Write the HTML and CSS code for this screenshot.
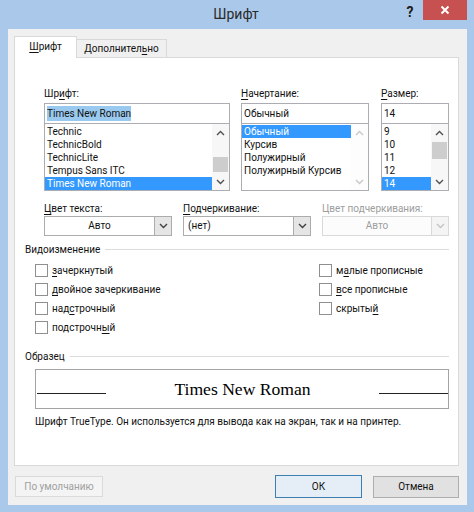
FILE: index.html
```html
<!DOCTYPE html>
<html lang="ru">
<head>
<meta charset="utf-8">
<title>Шрифт</title>
<link rel="stylesheet" href="styles.css">
</head>
<body>
<div class="win">
  <div class="titlebar">
    <div class="title">Шрифт</div>
    <div class="help">?</div>
    <div class="close"><svg width="10" height="10" viewBox="0 0 10 10"><path d="M1.5 1.5 L8.5 8.5 M8.5 1.5 L1.5 8.5" stroke="#fff" stroke-width="2" fill="none"/></svg></div>
  </div>
  <div class="dlg">
    <div class="tabs">
      <div class="tab active"><u>Ш</u>рифт</div>
      <div class="tab other">Дополнител<u>ь</u>но</div>
    </div>
    <div class="panel">
      <div class="row1">
        <div class="col c-font">
          <div class="lbl">Шр<u>и</u>фт:</div>
          <div class="edit"><span class="sel">Times New Roman</span></div>
          <div class="list">
            <div class="items">
              <div class="item">Technic</div>
              <div class="item">TechnicBold</div>
              <div class="item">TechnicLite</div>
              <div class="item">Tempus Sans ITC</div>
              <div class="item on">Times New Roman</div>
            </div>
            <div class="sb">
              <div class="arr"><svg width="9" height="6" viewBox="0 0 9 6"><path d="M1 5 L4.5 1.5 L8 5" stroke="#505050" stroke-width="1.4" fill="none"/></svg></div>
              <div class="track"><div class="thumb t-font"></div></div>
              <div class="arr"><svg width="9" height="6" viewBox="0 0 9 6"><path d="M1 1 L4.5 4.5 L8 1" stroke="#505050" stroke-width="1.4" fill="none"/></svg></div>
            </div>
          </div>
        </div>
        <div class="col c-style">
          <div class="lbl"><u>Н</u>ачертание:</div>
          <div class="edit">Обычный</div>
          <div class="list">
            <div class="items">
              <div class="item on">Обычный</div>
              <div class="item">Курсив</div>
              <div class="item">Полужирный</div>
              <div class="item">Полужирный Курсив</div>
            </div>
            <div class="sb dis">
              <div class="arr"><svg width="9" height="6" viewBox="0 0 9 6"><path d="M1 5 L4.5 1.5 L8 5" stroke="#c8c8c8" stroke-width="1.4" fill="none"/></svg></div>
              <div class="track"></div>
              <div class="arr"><svg width="9" height="6" viewBox="0 0 9 6"><path d="M1 1 L4.5 4.5 L8 1" stroke="#c8c8c8" stroke-width="1.4" fill="none"/></svg></div>
            </div>
          </div>
        </div>
        <div class="col c-size">
          <div class="lbl"><u>Р</u>азмер:</div>
          <div class="edit">14</div>
          <div class="list">
            <div class="items">
              <div class="item">9</div>
              <div class="item">10</div>
              <div class="item">11</div>
              <div class="item">12</div>
              <div class="item on">14</div>
            </div>
            <div class="sb">
              <div class="arr"><svg width="9" height="6" viewBox="0 0 9 6"><path d="M1 5 L4.5 1.5 L8 5" stroke="#505050" stroke-width="1.4" fill="none"/></svg></div>
              <div class="track"><div class="thumb t-size"></div></div>
              <div class="arr"><svg width="9" height="6" viewBox="0 0 9 6"><path d="M1 1 L4.5 4.5 L8 1" stroke="#505050" stroke-width="1.4" fill="none"/></svg></div>
            </div>
          </div>
        </div>
      </div>

      <div class="row2">
        <div class="col c-a">
          <div class="lbl"><u>Ц</u>вет текста:</div>
          <div class="combo">
            <div class="val center">Авто</div>
            <div class="drop"><svg width="9" height="6" viewBox="0 0 9 6"><path d="M1 1 L4.5 4.5 L8 1" stroke="#404040" stroke-width="1.4" fill="none"/></svg></div>
          </div>
        </div>
        <div class="col c-b">
          <div class="lbl"><u>П</u>одчеркивание:</div>
          <div class="combo">
            <div class="val">(нет)</div>
            <div class="drop"><svg width="9" height="6" viewBox="0 0 9 6"><path d="M1 1 L4.5 4.5 L8 1" stroke="#404040" stroke-width="1.4" fill="none"/></svg></div>
          </div>
        </div>
        <div class="col c-c">
          <div class="lbl gray">Цвет подчеркивания:</div>
          <div class="combo dis">
            <div class="val center">Авто</div>
            <div class="drop"><svg width="9" height="6" viewBox="0 0 9 6"><path d="M1 1 L4.5 4.5 L8 1" stroke="#c4c4c4" stroke-width="1.4" fill="none"/></svg></div>
          </div>
        </div>
      </div>

      <div class="hdr h-mod">Видоизменение</div>
      <div class="checks">
        <div class="ccol left">
          <div class="chk"><span class="box"></span><span><u>з</u>ачеркнутый</span></div>
          <div class="chk"><span class="box"></span><span><u>д</u>войное зачеркивание</span></div>
          <div class="chk"><span class="box"></span><span>над<u>с</u>трочный</span></div>
          <div class="chk"><span class="box"></span><span>подстрочн<u>ы</u>й</span></div>
        </div>
        <div class="ccol right">
          <div class="chk"><span class="box"></span><span>м<u>а</u>лые прописные</span></div>
          <div class="chk"><span class="box"></span><span><u>в</u>се прописные</span></div>
          <div class="chk"><span class="box"></span><span>скрыты<u>й</u></span></div>
        </div>
      </div>

      <div class="hdr h-sample">Образец</div>
      <div class="sample">
        <span class="ln"></span>
        <span class="stext">Times New Roman</span>
        <span class="ln"></span>
      </div>
      <div class="desc">Шрифт TrueType. Он используется для вывода как на экран, так и на принтер.</div>
    </div>
    <div class="btnrow">
      <div class="btn def-dis">По умолчанию</div>
      <div class="spacer"></div>
      <div class="btn ok">ОК</div>
      <div class="btn cancel">Отмена</div>
    </div>
  </div>
</div>
</body>
</html>
```

FILE: styles.css
```css
html, body { margin: 0; padding: 0; }
body {
  width: 474px; height: 512px; overflow: hidden;
  background: #aac9ea;
  font-family: Roboto, "Noto Sans", sans-serif;
  font-size: 10px; color: #111;
}
u { text-decoration: underline; text-underline-offset: 1.5px; }
.win { height: 512px; display: flex; flex-direction: column; }

.titlebar { height: 29px; flex: none; display: flex; align-items: flex-start; }
.title { flex: 1; padding-left: 70px; text-align: center; font-size: 14px; line-height: 29px; color: #2b2b2b; }
.help { width: 16px; margin-right: 5px; font-weight: bold; font-size: 14px; line-height: 24px; text-align: center; color: #1c1c1c; }
.close { width: 44px; height: 20px; margin-right: 7px; background: #c75050; display: flex; align-items: center; justify-content: center; }

.dlg {
  margin: 0 7px 0 8px; height: 476px; box-sizing: border-box;
  background: #f0f0f0; padding: 7px 8px 0 6px;
  display: flex; flex-direction: column;
}
.tabs { display: flex; align-items: flex-end; height: 21px; flex: none; }
.tab { box-sizing: border-box; border: 1px solid #d9d9d9; border-bottom: none; text-align: center; }
.tab.active { width: 63px; height: 22px; margin-bottom: -1px; background: #fff; position: relative; line-height: 20px; }
.tab.other { width: 90px; height: 18px; border-left: none; background: #f0f0f0; line-height: 17px; }

.panel {
  height: 409px; flex: none; box-sizing: border-box;
  border: 1px solid #d9d9d9; background: #fff;
  display: flex; flex-direction: column;
}

.lbl { height: 15px; line-height: 15px; white-space: nowrap; }
.lbl.gray { color: #9d9d9d; }

.row1 { display: flex; margin: 28px 0 0 29px; }
.col { display: flex; flex-direction: column; }
.c-font { width: 186px; }
.c-style { width: 128px; margin-left: 11px; }
.c-size { width: 68px; margin-left: 12px; }
.row1 .lbl { margin-bottom: 2px; }

.edit {
  height: 21px; box-sizing: border-box; border: 1px solid #abadb3;
  padding: 0 0 0 2px; line-height: 19px; white-space: nowrap;
}
.edit .sel { background: #99c9ef; padding: 2px 0; }

.list {
  height: 68px; margin-top: -1px; box-sizing: border-box;
  border: 1px solid #abadb3; display: flex;
}
.items { flex: 1; padding-top: 1px; overflow: hidden; }
.item { height: 13px; line-height: 13px; padding-left: 2px; white-space: nowrap; }
.item.on { background: #3399ff; color: #fff; }

.sb { width: 17px; display: flex; flex-direction: column; background: #f7f7f7; }
.sb.dis { background: #fdfdfd; }
.arr { height: 17px; display: flex; align-items: center; justify-content: center; }
.track { flex: 1; }
.thumb { background: #cdcdcd; margin: 0 1px; }
.t-font { margin-top: 16px; height: 15px; }
.t-size { margin-top: 1px; height: 17px; }

.row2 { display: flex; margin: 10px 0 0 29px; }
.c-a { width: 128px; }
.c-b { width: 128px; margin-left: 11px; }
.c-c { width: 127px; margin-left: 11px; }

.combo {
  height: 20px; box-sizing: border-box; border: 1px solid #acacac;
  display: flex; background: #fff;
}
.combo .val { flex: 1; padding-left: 4px; line-height: 18px; }
.combo .val.center { text-align: center; padding-left: 0; }
.drop {
  width: 16px; background: #e5e5e5; border-left: 1px solid #acacac;
  display: flex; align-items: center; justify-content: center;
}
.combo.dis { border-color: #d9d9d9; color: #9d9d9d; background: #fcfcfc; }
.combo.dis .drop { background: #f4f4f4; border-left-color: #d9d9d9; }

.hdr {
  display: flex; align-items: center; width: 424px; margin-left: 10px;
  height: 15px; line-height: 15px; white-space: nowrap;
}
.hdr::after { content: ""; flex: 1; height: 1px; background: #dcdcdc; margin-left: 5px; }
.h-mod { margin-top: 6px; }

.checks { display: flex; margin: 4px 0 0 20px; }
.ccol { display: flex; flex-direction: column; }
.ccol.left { width: 284px; }
.chk { height: 19px; display: flex; align-items: center; white-space: nowrap; }
.box {
  width: 13px; height: 13px; box-sizing: border-box;
  border: 1px solid #8f8f8f; background: #fff; margin-right: 4px; flex: none;
}

.h-sample { margin-top: 12px; }
.sample {
  margin: 5px 0 0 20px; width: 414px; height: 40px; box-sizing: border-box;
  border: 1px solid #a3a3a3; display: flex; align-items: flex-end;
  padding: 0 0 14px 1px;
}
.ln { width: 69px; height: 1px; background: #222; flex: none; }
.stext {
  flex: 1; text-align: center;
  font-family: "Liberation Serif", "Times New Roman", serif;
  font-size: 17.6px; line-height: 18px; margin-bottom: -4px; color: #000;
}
.desc { margin: 5px 0 0 20px; height: 15px; line-height: 15px; white-space: nowrap; }

.btnrow { display: flex; margin-top: 9px; height: 23px; align-items: flex-start; }
.btn {
  box-sizing: border-box; height: 22px; border: 1px solid #adadad;
  background: #e1e1e1; text-align: center; line-height: 20px;
}
.def-dis { width: 88px; margin: 1px 0 0 1px; height: 21px; background: #f4f4f4; border-color: #dadada; color: #a0a0a0; line-height: 19px; }
.spacer { flex: 1; }
.ok { width: 87px; border-color: #3c7fb1; height: 23px; line-height: 21px; background: #e5eef7; }
.cancel { width: 86px; margin-left: 11px; margin-top: 1px; }
```
